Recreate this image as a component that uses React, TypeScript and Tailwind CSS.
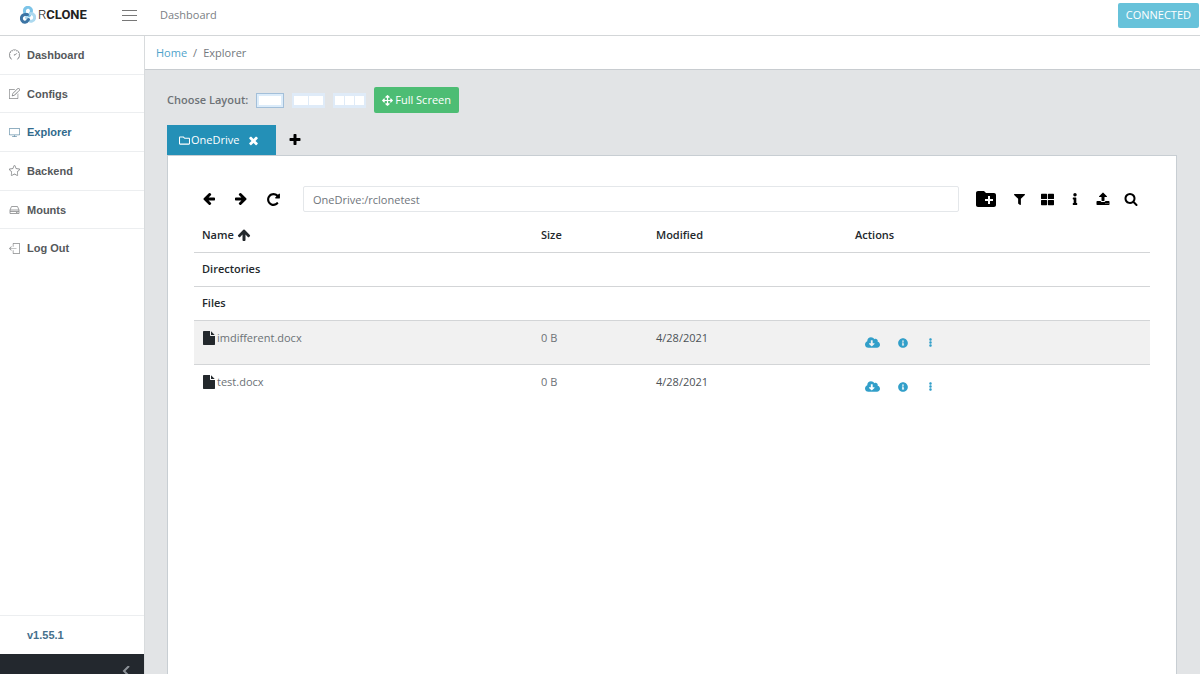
import { useState } from "react";
import type { ReactNode } from "react";
import {
  FaArrowsAlt,
  FaCloudDownloadAlt,
  FaEllipsisV,
  FaFilter,
  FaInfo,
  FaInfoCircle,
  FaRegFolder,
  FaThLarge,
} from "react-icons/fa";
import { MdCreateNewFolder } from "react-icons/md";
import { SlLogout, SlNote, SlScreenDesktop, SlSpeedometer, SlStar } from "react-icons/sl";

const glyphs = {
  arrow:
    "M1675 971q0 51-37 90l-75 75q-38 38-91 38-54 0-90-38l-294-293v704q0 52-37.5 84.5t-90.5 32.5h-128q-53 0-90.5-32.5t-37.5-84.5v-704l-294 293q-36 38-90 38t-90-38l-75-75q-38-38-38-90 0-53 38-91l651-651q35-37 90-37 54 0 91 37l651 651q37 39 37 91z",
  file:
    "M1152 512v-472q22 14 36 28l408 408q14 14 28 36h-472zm-128 32q0 40 28 68t68 28h544v1056q0 40-28 68t-68 28h-1344q-40 0-68-28t-28-68v-1600q0-40 28-68t68-28h800v544z",
  times:
    "M1490 1322q0 40-28 68l-136 136q-28 28-68 28t-68-28l-294-294-294 294q-28 28-68 28t-68-28l-136-136q-28-28-28-68t28-68l294-294-294-294q-28-28-28-68t28-68l136-136q28-28 68-28t68 28l294 294 294-294q28-28 68-28t68 28l136 136q28 28 28 68t-28 68l-294 294 294 294q28 28 28 68z",
  plus:
    "M1600 736v192q0 40-28 68t-68 28h-416v416q0 40-28 68t-68 28h-192q-40 0-68-28t-28-68v-416h-416q-40 0-68-28t-28-68v-192q0-40 28-68t68-28h416v-416q0-40 28-68t68-28h192q40 0 68 28t28 68v416h416q40 0 68 28t28 68z",
  repeat:
    "M1664 256v448q0 26-19 45t-45 19h-448q-42 0-59-40-17-39 14-69l138-138q-148-137-349-137-104 0-198.5 40.5t-163.5 109.5-109.5 163.5-40.5 198.5 40.5 198.5 109.5 163.5 163.5 109.5 198.5 40.5q119 0 225-52t179-147q7-10 23-12 15 0 25 9l137 138q9 8 9.5 20.5t-7.5 22.5q-109 132-264 204.5t-327 72.5q-156 0-298-61t-245-164-164-245-61-298 61-298 164-245 245-164 298-61q147 0 284.5 55.5t244.5 156.5l130-129q29-31 70-14 39 17 39 59z",
  upload:
    "M1344 1472q0-26-19-45t-45-19-45 19-19 45 19 45 45 19 45-19 19-45zm256 0q0-26-19-45t-45-19-45 19-19 45 19 45 45 19 45-19 19-45zm128-224v320q0 40-28 68t-68 28h-1472q-40 0-68-28t-28-68v-320q0-40 28-68t68-28h427q21 56 70.5 92t110.5 36h256q61 0 110.5-36t70.5-92h427q40 0 68 28t28 68zm-325-648q-17 40-59 40h-256v448q0 26-19 45t-45 19h-256q-26 0-45-19t-19-45v-448h-256q-42 0-59-40-17-39 14-70l448-448q18-19 45-19t45 19l448 448q31 31 14 70z",
  search:
    "M1216 832q0-185-131.5-316.5t-316.5-131.5-316.5 131.5-131.5 316.5 131.5 316.5 316.5 131.5 316.5-131.5 131.5-316.5zm512 832q0 52-38 90t-90 38q-54 0-90-38l-343-342q-179 124-399 124-143 0-273.5-55.5t-225-150-150-225-55.5-273.5 55.5-273.5 150-225 225-150 273.5-55.5 273.5 55.5 225 150 150 225 55.5 273.5q0 220-124 399l343 343q37 37 37 90z",
};

const Glyph = ({ name, size, className }: { name: keyof typeof glyphs; size: number; className?: string }) => (
  <svg width={size} height={size} viewBox="0 0 1792 1792" fill="currentColor" className={className}>
    <path d={glyphs[name]} />
  </svg>
);

const DriveIcon = () => (
  <svg width="11" height="11" viewBox="0 0 22 22" fill="none" stroke="currentColor" strokeWidth="1.6">
    <path d="M2 12 5 5h12l3 7v7H2zM2 12h18M2 15h18M14 17h3" />
  </svg>
);

const Logo = () => (
  <svg width="16" height="18" viewBox="0 0 32 36" fill="none" strokeWidth="6" strokeLinecap="round">
    <path d="M10 16 9 11a7 7 0 1 1 13 2l-4 7" stroke="#7cc4e8" />
    <path d="M21 15c7 0 9 5 8 10s-8 8-13 3l-3-5" stroke="#acd9ef" />
    <path d="M17 27c-4 7-10 7-13 2s0-12 7-12h4" stroke="#3c74a4" />
  </svg>
);

const navItems = [
  { label: "Dashboard", icon: <SlSpeedometer size={11} /> },
  { label: "Configs", icon: <SlNote size={11} /> },
  { label: "Explorer", icon: <SlScreenDesktop size={11} /> },
  { label: "Backend", icon: <SlStar size={11} /> },
  { label: "Mounts", icon: <DriveIcon /> },
  { label: "Log Out", icon: <SlLogout size={11} /> },
];

const files = [
  { name: "imdifferent.docx", size: "0 B", modified: "4/28/2021" },
  { name: "test.docx", size: "0 B", modified: "4/28/2021" },
];

const IconButton = ({ label, className = "", children }: { label: string; className?: string; children: ReactNode }) => (
  <button aria-label={label} className={`flex items-center justify-center ${className}`}>
    {children}
  </button>
);

const Header = () => (
  <header className="flex h-9 shrink-0 items-center border-b border-[#d3d6d8] bg-white pb-[5px]">
    <a href="#home" className="flex w-24 items-center gap-[2px] pl-5 font-['Roboto',sans-serif] text-[13px] text-[#222]">
      <Logo />
      <span>
        <span className="font-light">R</span>
        <span className="font-bold">CLONE</span>
      </span>
    </a>
    <button aria-label="Toggle sidebar" className="ml-[26px] flex w-[15px] flex-col gap-1">
      <span className="h-px w-full bg-[#777]" />
      <span className="h-px w-full bg-[#777]" />
      <span className="h-px w-full bg-[#777]" />
    </button>
    <a href="#dashboard" className="ml-[23px] text-[#7b8085]">
      Dashboard
    </a>
    <button className="mr-px ml-auto h-[25px] rounded-xs bg-[#67c2da] px-2 text-white">CONNECTED</button>
  </header>
);

const Sidebar = () => (
  <aside className="flex w-36 shrink-0 flex-col bg-white font-['Liberation_Sans',sans-serif] font-bold">
    <nav className="flex h-[231px] flex-col">
      {navItems.map((item) => (
        <a
          key={item.label}
          href="#"
          className={
            item.label === "Explorer"
              ? "flex flex-1 items-center gap-[7px] border-b border-[#eceef0] pl-[9px] text-[#316a8c]"
              : "flex flex-1 items-center gap-[7px] border-b border-[#eceef0] pl-[9px] text-[#55585b] last:border-0"
          }
        >
          <span className="opacity-70">{item.icon}</span>
          {item.label}
        </a>
      ))}
    </nav>
    <a href="#version" className="mt-auto flex h-[39px] items-center border-t border-[#eceef0] pl-[27px] text-[#456f8c]">
      v1.55.1
    </a>
    <button aria-label="Minimize sidebar" className="flex h-5 items-end justify-end overflow-hidden bg-[#23282e] pr-[14px]">
      <svg width="8" height="8" viewBox="0 0 8 8" fill="none" stroke="#8d9399" strokeWidth="2">
        <path d="M7 0 2 5l5 5" />
      </svg>
    </button>
  </aside>
);

const paneWidths = ["w-[22px]", "w-[14px]", "w-[9px]"];

const LayoutPicker = () => {
  const [layout, setLayout] = useState(1);

  return (
    <div className="flex items-center">
      <span className="mr-2 font-semibold text-[#6d7276]">Choose Layout:</span>
      <div className="flex items-center gap-2">
        {paneWidths.map((width, index) => {
          const panes = index + 1;
          return (
            <button
              key={panes}
              aria-label={`${panes} pane layout`}
              onClick={() => setLayout(panes)}
              className={
                layout === panes
                  ? "flex h-[15px] gap-px border border-[#a3bfd9] bg-[#dcecfa] p-[2px]"
                  : "flex h-[15px] gap-px border border-[#dfebf8] bg-[#dfebf8] p-[2px] px-px"
              }
            >
              {Array.from({ length: panes }, (_, i) => (
                <span key={i} className={`h-full bg-white ${width}`} />
              ))}
            </button>
          );
        })}
      </div>
      <button className="ml-2 flex h-[26px] items-center gap-[2px] rounded-xs bg-[#4dbd74] px-2 text-white">
        <FaArrowsAlt size={11} />
        Full Screen
      </button>
    </div>
  );
};

const Toolbar = () => (
  <div className="flex h-[26px] items-center pr-[5px] pl-2 text-black">
    <div className="flex w-[101px] items-center gap-[18px]">
      <IconButton label="Back">
        <Glyph name="arrow" size={14} className="-rotate-90" />
      </IconButton>
      <IconButton label="Forward">
        <Glyph name="arrow" size={14} className="rotate-90" />
      </IconButton>
      <IconButton label="Refresh">
        <Glyph name="repeat" size={15} />
      </IconButton>
    </div>
    <input
      aria-label="Path"
      defaultValue="OneDrive:/rclonetest"
      className="h-[26px] min-w-0 flex-1 rounded-xs border border-[#e4e7ea] px-[9px] text-[#6f757b]"
    />
    <div className="ml-[15px] flex items-center">
      <IconButton label="New folder" className="mr-[7px]">
        <MdCreateNewFolder size={24} />
      </IconButton>
      <IconButton label="Filter" className="w-7">
        <FaFilter size={11} />
      </IconButton>
      <IconButton label="Grid view" className="w-7">
        <FaThLarge size={13} />
      </IconButton>
      <IconButton label="Info" className="w-7">
        <FaInfo size={12} />
      </IconButton>
      <IconButton label="Upload" className="w-7">
        <Glyph name="upload" size={14} />
      </IconButton>
      <IconButton label="Search" className="w-7">
        <Glyph name="search" size={14} />
      </IconButton>
    </div>
  </div>
);

const FileTable = () => (
  <table className="mt-[6px] w-full table-fixed text-left text-[#6c7176]">
    <thead className="text-[#23282c]">
      <tr className="h-[34px] border-b border-[#d3d5d7]">
        <th className="w-[338px] pl-2 font-semibold">
          <button className="flex items-center gap-[3px]">
            Name <Glyph name="arrow" size={14} />
          </button>
        </th>
        <th className="w-[115px] pl-[9px] font-semibold">Size</th>
        <th className="w-[199px] pl-[9px] font-semibold">Modified</th>
        <th className="pl-[9px] font-semibold">Actions</th>
      </tr>
    </thead>
    <tbody>
      <tr className="h-[34px] border-b border-[#d3d5d7] text-[#23282c]">
        <th colSpan={4} className="pl-2 font-semibold">
          Directories
        </th>
      </tr>
      <tr className="h-[34px] border-b border-[#d3d5d7] text-[#23282c]">
        <th colSpan={4} className="pl-2 font-semibold">
          Files
        </th>
      </tr>
      {files.map((file) => (
        <tr key={file.name} className="h-11 border-b border-[#d3d5d7] align-top odd:bg-[#f1f1f1] last:border-0">
          <td className="pt-[9px] pl-2">
            <span className="flex items-center gap-px">
              <Glyph name="file" size={14} className="text-[#23282c]" />
              {file.name}
            </span>
          </td>
          <td className="pt-[9px] pl-[9px]">{file.size}</td>
          <td className="pt-[9px] pl-[9px] text-[#4c5156]">{file.modified}</td>
          <td className="pt-[14px] pl-[19px]">
            <div className="flex h-4 items-center gap-[18px] text-[#329fc9]">
              <IconButton label={`Download ${file.name}`}>
                <FaCloudDownloadAlt size={15} />
              </IconButton>
              <IconButton label={`Details of ${file.name}`}>
                <FaInfoCircle size={10} />
              </IconButton>
              <IconButton label={`More actions for ${file.name}`}>
                <FaEllipsisV size={9} />
              </IconButton>
            </div>
          </td>
        </tr>
      ))}
    </tbody>
  </table>
);

const App = () => {
  return (
    <div className="flex h-screen flex-col overflow-hidden bg-[#e2e4e6] font-['Open_Sans',sans-serif] text-[11px] leading-4">
      <Header />
      <div className="flex min-h-0 flex-1">
        <Sidebar />
        <main className="flex min-w-0 flex-1 flex-col border-l border-[#d8dbdd]">
          <nav className="flex h-[34px] shrink-0 items-center gap-[6px] border-b border-[#c8ccd0] bg-white px-[11px] text-[#73787d]">
            <a href="#home" className="text-[#4ea3cb]">
              Home
            </a>
            <span>/</span>
            <span>Explorer</span>
          </nav>
          <div className="flex min-h-0 flex-1 flex-col pt-[17px] pr-[23px] pl-[22px]">
            <LayoutPicker />
            <div className="mt-3 flex items-center">
              <div className="flex h-[30px] items-center gap-2 bg-[#2490b7] pr-4 pl-3 text-white">
                <button className="flex items-center gap-px">
                  <FaRegFolder size={11} />
                  OneDrive
                </button>
                <button aria-label="Close OneDrive">
                  <Glyph name="times" size={13} />
                </button>
              </div>
              <button aria-label="New tab" className="ml-3 text-black">
                <Glyph name="plus" size={14} />
              </button>
            </div>
            <section className="flex-1 border border-b-0 border-[#c8ced3] bg-white px-[26px] pt-[30px]">
              <Toolbar />
              <FileTable />
            </section>
          </div>
        </main>
      </div>
    </div>
  );
};

export default App;
